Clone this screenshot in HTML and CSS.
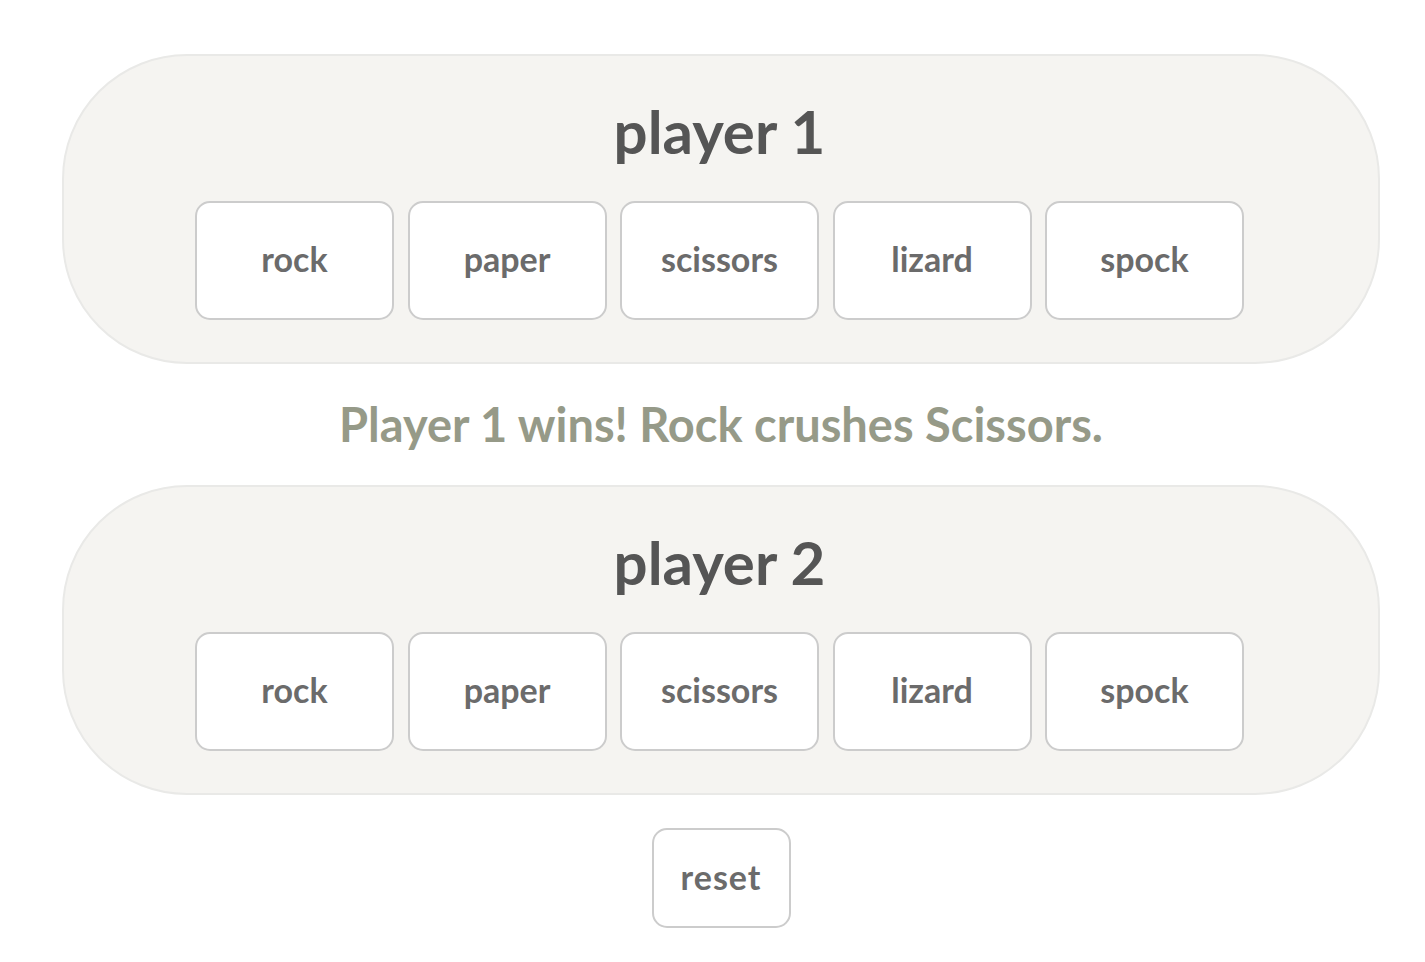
FILE: index.html
```html
<!DOCTYPE html>
<html lang="en">
<head>
<meta charset="utf-8">
<title>Rock Paper Scissors Lizard Spock</title>
<link rel="stylesheet" href="styles.css">
</head>
<body>
<main class="game">
  <section class="panel">
    <h2 class="player-title">player 1</h2>
    <div class="choices">
      <button class="choice">rock</button>
      <button class="choice">paper</button>
      <button class="choice">scissors</button>
      <button class="choice">lizard</button>
      <button class="choice">spock</button>
    </div>
  </section>
  <p class="result">Player 1 wins! Rock crushes Scissors.</p>
  <section class="panel">
    <h2 class="player-title">player 2</h2>
    <div class="choices">
      <button class="choice">rock</button>
      <button class="choice">paper</button>
      <button class="choice">scissors</button>
      <button class="choice">lizard</button>
      <button class="choice">spock</button>
    </div>
  </section>
  <div class="actions">
    <button class="reset">reset</button>
  </div>
</main>
</body>
</html>
```
FILE: styles.css
```css
html, body {
  margin: 0;
  padding: 0;
  background: #ffffff;
}

body {
  font-family: "Lato", "Noto Sans", sans-serif;
}

.game {
  padding: 54px 45px 0 62px;
  display: flex;
  flex-direction: column;
}

.panel {
  background: #f5f4f1;
  border: 2px solid #e9e9e7;
  border-radius: 125px;
  padding: 40px 3px 42px 0;
  display: flex;
  flex-direction: column;
  align-items: center;
}

.player-title {
  margin: 0 0 35px;
  font-size: 60px;
  line-height: 70px;
  font-weight: 700;
  color: #555555;
}

.choices {
  display: flex;
  gap: 13.5px;
}

.choice,
.reset {
  font-family: "Lato", "Noto Sans", sans-serif;
  font-size: 34px;
  font-weight: 700;
  color: #6b6b6b;
  background: #ffffff;
  border: 2px solid #cccccc;
  border-radius: 15px;
  padding: 0 0 4px;
}

.choice {
  width: 199px;
  height: 119px;
}

.result {
  margin: 35px 0 36px;
  text-align: center;
  font-size: 47px;
  line-height: 50px;
  font-weight: 700;
  color: #969a88;
}

.actions {
  display: flex;
  justify-content: center;
  padding-top: 33px;
}

.reset {
  width: 139px;
  height: 100px;
  letter-spacing: 1px;
}
```
